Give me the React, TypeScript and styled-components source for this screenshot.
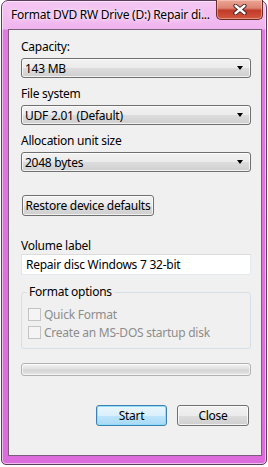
import { createGlobalStyle } from 'styled-components';
import styled from 'styled-components';

const GlobalStyle = createGlobalStyle`
  html, body {
    margin: 0;
    padding: 0;
    background: #ffffff;
  }
  body {
    font-family: 'Noto Sans', 'Liberation Sans', sans-serif;
    font-size: 12px;
    letter-spacing: -0.25px;
    color: #000;
  }
`;

const FONT = `'Noto Sans', 'Liberation Sans', sans-serif`;

export default function App() {
  return (
    <>
      <GlobalStyle />
      <Window>
        <TitleBar>
          <Title>Format DVD RW Drive (D:) Repair di...</Title>
          <CloseButton aria-label="Close">
            <svg width="14" height="11" viewBox="0 0 14 11">
              <path
                d="M2.5 1.8 L11.5 9.2 M11.5 1.8 L2.5 9.2"
                stroke="#3c1a1a"
                strokeWidth="4.2"
                strokeLinecap="round"
              />
              <path
                d="M2.5 1.8 L11.5 9.2 M11.5 1.8 L2.5 9.2"
                stroke="#ffffff"
                strokeWidth="2.4"
                strokeLinecap="round"
              />
            </svg>
          </CloseButton>
        </TitleBar>
        <Client>
          <Label>Capacity:</Label>
          <Combo>
            <span>143 MB</span>
            <Arrow />
          </Combo>

          <Label $top={8}>File system</Label>
          <Combo>
            <span>UDF 2.01 (Default)</span>
            <Arrow />
          </Combo>

          <Label $top={8}>Allocation unit size</Label>
          <Combo>
            <span>2048 bytes</span>
            <Arrow />
          </Combo>

          <Button $width={132} $top={23} $left={1}>
            Restore device defaults
          </Button>

          <Label $top={22} $bottom={0}>
            Volume label
          </Label>
          <TextInput>Repair disc Windows 7 32-bit</TextInput>

          <Group>
            <Legend>Format options</Legend>
            <CheckRow>
              <CheckBox />
              <span>Quick Format</span>
            </CheckRow>
            <CheckRow>
              <CheckBox />
              <span>Create an MS-DOS startup disk</span>
            </CheckRow>
          </Group>

          <Progress />

          <ButtonRow>
            <Button $width={71} $primary>
              Start
            </Button>
            <Button $width={72}>Close</Button>
          </ButtonRow>
        </Client>
      </Window>
    </>
  );
}

const Window = styled.div`
  position: relative;
  box-sizing: border-box;
  margin-left: 1px;
  width: 266px;
  height: 465px;
  border: 1px solid #5e3c5e;
  border-radius: 7px 7px 5px 5px;
  background: linear-gradient(
    180deg,
    #f4c6f2 0px,
    #f0b4ee 28px,
    #e07ade 29px,
    #dc6cdc 100%
  );
  box-shadow: inset 0 0 0 1px rgba(255, 255, 255, 0.55);
  display: flex;
  flex-direction: column;
`;

const TitleBar = styled.div`
  height: 28px;
  display: flex;
  align-items: flex-start;
  justify-content: space-between;
  padding-left: 9px;
`;

const Title = styled.div`
  font-family: ${FONT};
  font-size: 12px;
  line-height: 16px;
  margin-top: 6px;
  color: #000;
  white-space: nowrap;
  text-shadow: 0 0 6px rgba(255, 255, 255, 0.9), 0 0 3px rgba(255, 255, 255, 0.9);
`;

const CloseButton = styled.div`
  box-sizing: border-box;
  width: 47px;
  height: 20px;
  margin-top: -1px;
  margin-right: 3px;
  border: 1px solid #6b2a26;
  border-top: none;
  border-radius: 0 0 5px 5px;
  background: linear-gradient(
    180deg,
    #eba696 0%,
    #dd8473 42%,
    #c23a2a 55%,
    #d2583f 100%
  );
  box-shadow: inset 0 0 0 1px rgba(255, 220, 210, 0.45);
  display: flex;
  align-items: center;
  justify-content: center;
`;

const Client = styled.div`
  flex: 1;
  margin: 0 4px 8px 6px;
  border: 1px solid #7a5e7a;
  background: #f0f0f0;
  padding: 9px 10px 0 12px;
  display: flex;
  flex-direction: column;
  align-items: stretch;
`;

const Label = styled.div<{ $top?: number; $bottom?: number }>`
  font-family: ${FONT};
  font-size: 12px;
  line-height: 16px;
  margin-top: ${(p) => p.$top ?? 0}px;
  margin-bottom: ${(p) => p.$bottom ?? 3}px;
  color: #000;
  white-space: nowrap;
`;

const Combo = styled.div`
  box-sizing: border-box;
  height: 20px;
  border: 1px solid #707070;
  border-radius: 3px;
  background: linear-gradient(180deg, #f2f2f2 0%, #ebebeb 50%, #dddddd 51%, #cfcfcf 100%);
  box-shadow: inset 0 0 0 1px rgba(255, 255, 255, 0.7);
  display: flex;
  align-items: center;
  justify-content: space-between;
  padding: 0 7px 0 3px;
  font-family: ${FONT};
  font-size: 12px;
  color: #000;
  white-space: nowrap;
`;

const Arrow = styled.span`
  width: 0;
  height: 0;
  border-left: 3.5px solid transparent;
  border-right: 3.5px solid transparent;
  border-top: 4px solid #000;
`;

const Button = styled.div<{ $width: number; $top?: number; $left?: number; $primary?: boolean }>`
  box-sizing: border-box;
  width: ${(p) => p.$width}px;
  height: 21px;
  margin-top: ${(p) => p.$top ?? 0}px;
  margin-left: ${(p) => p.$left ?? 0}px;
  border: 1px solid ${(p) => (p.$primary ? '#3c7fb1' : '#707070')};
  border-radius: 3px;
  background: ${(p) =>
    p.$primary
      ? 'linear-gradient(180deg, #eaf6fd 0%, #d9f0fc 50%, #bee6fd 51%, #a7d9f5 100%)'
      : 'linear-gradient(180deg, #f2f2f2 0%, #ebebeb 50%, #dddddd 51%, #cfcfcf 100%)'};
  box-shadow: inset 0 0 0 1px
    ${(p) => (p.$primary ? 'rgba(140, 220, 250, 0.9)' : 'rgba(255, 255, 255, 0.7)')};
  display: flex;
  align-items: center;
  justify-content: center;
  font-family: ${FONT};
  font-size: 12px;
  color: #000;
  white-space: nowrap;
`;

const TextInput = styled.div`
  box-sizing: border-box;
  height: 21px;
  border: 1px solid;
  border-color: #dcdcdc #e3e9ef #e3e9ef #e3e3e3;
  background: #fff;
  display: flex;
  align-items: center;
  padding-left: 4px;
  font-family: ${FONT};
  font-size: 12px;
  color: #000;
  white-space: nowrap;
`;

const Group = styled.div`
  position: relative;
  box-sizing: border-box;
  margin-top: 17px;
  height: 57px;
  border: 1px solid #d5dfe5;
  border-radius: 3px;
  padding: 15px 0 0 6px;
  display: flex;
  flex-direction: column;
  gap: 5px;
`;

const Legend = styled.div`
  position: absolute;
  top: -9px;
  left: 5px;
  padding: 0 2px;
  background: #f0f0f0;
  font-family: ${FONT};
  font-size: 12px;
  line-height: 16px;
  color: #000;
  white-space: nowrap;
`;

const CheckRow = styled.div`
  display: flex;
  align-items: center;
  gap: 3px;
  height: 13px;
  font-family: ${FONT};
  font-size: 12px;
  line-height: 13px;
  color: #8d8d8d;
  white-space: nowrap;
`;

const CheckBox = styled.span`
  box-sizing: border-box;
  flex: none;
  width: 13px;
  height: 13px;
  border: 1px solid #c4c4c4;
  background: #f4f4f4;
`;

const Progress = styled.div`
  box-sizing: border-box;
  margin-top: 14px;
  height: 13px;
  border: 1px solid #b2b2b2;
  border-radius: 3px;
  background: linear-gradient(180deg, #f3f3f3 0%, #e0e0e0 45%, #d4d4d4 55%, #e8e8e8 100%);
  box-shadow: inset 0 0 0 1px rgba(255, 255, 255, 0.6);
`;

const ButtonRow = styled.div`
  margin-top: 29px;
  display: flex;
  justify-content: flex-end;
  gap: 10px;
  padding-right: 2px;
`;
